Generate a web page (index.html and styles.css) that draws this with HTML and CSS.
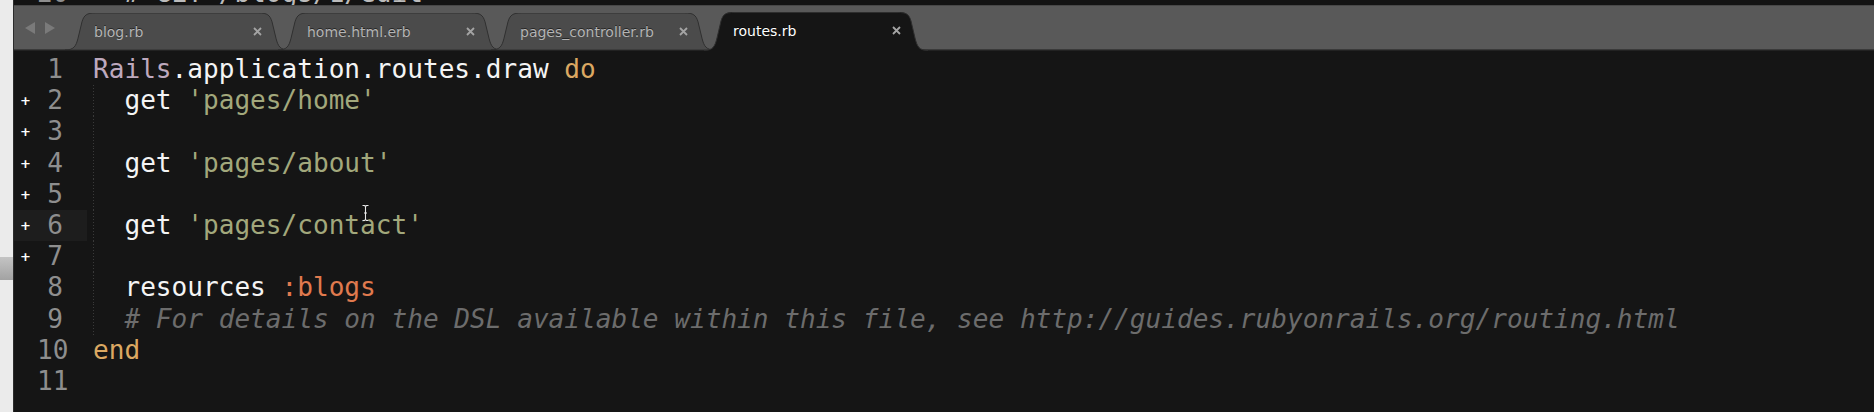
FILE: index.html
```html
<!DOCTYPE html>
<html>
<head>
<meta charset="utf-8">
<link rel="stylesheet" href="styles.css">
</head>
<body>
<div class="screen">
  <div class="side"><div class="side-bar"></div></div>
  <div class="editor">
    <div class="topstrip">
      <div class="line peek"><div class="gutter"><span class="mark"></span><span class="num">20</span></div><div class="text">  <span class="peek-t"># GET /blogs/1/edit</span></div></div>
    </div>
    <div class="tabbar">
      <div class="arrows">
        <svg width="30" height="12" viewBox="0 0 30 12"><path d="M10 0 L0 6 L10 12 Z" fill="#7a7a7a"/><path d="M20 0 L30 6 L20 12 Z" fill="#7a7a7a"/></svg>
      </div>
      <div class="tabs">
        <div class="tab">
          <svg class="shape" viewBox="0 0 224 38" preserveAspectRatio="none"><path class="fill" d="M0 38 C9 38 11 34 13 26 L17 9 C19 2 22 0 30 0 H194 C202 0 205 2 207 9 L211 26 C213 34 215 38 224 38 Z"/></svg>
          <span class="label">blog.rb</span>
          <svg class="close" width="9" height="9" viewBox="0 0 9 9"><path d="M1 1 L8 8 M8 1 L1 8"/></svg>
        </div>
        <div class="tab">
          <svg class="shape" viewBox="0 0 224 38" preserveAspectRatio="none"><path class="fill" d="M0 38 C9 38 11 34 13 26 L17 9 C19 2 22 0 30 0 H194 C202 0 205 2 207 9 L211 26 C213 34 215 38 224 38 Z"/></svg>
          <span class="label">home.html.erb</span>
          <svg class="close" width="9" height="9" viewBox="0 0 9 9"><path d="M1 1 L8 8 M8 1 L1 8"/></svg>
        </div>
        <div class="tab">
          <svg class="shape" viewBox="0 0 224 38" preserveAspectRatio="none"><path class="fill" d="M0 38 C9 38 11 34 13 26 L17 9 C19 2 22 0 30 0 H194 C202 0 205 2 207 9 L211 26 C213 34 215 38 224 38 Z"/></svg>
          <span class="label">pages_controller.rb</span>
          <svg class="close" width="9" height="9" viewBox="0 0 9 9"><path d="M1 1 L8 8 M8 1 L1 8"/></svg>
        </div>
        <div class="tab active">
          <svg class="shape" viewBox="0 0 224 39" preserveAspectRatio="none"><path class="fill" d="M0 39 C9 39 11 34 13 26 L17 9 C19 2 22 0 30 0 H194 C202 0 205 2 207 9 L211 26 C213 34 215 39 224 39 Z"/><path class="edge" d="M0 38.5 C9 38.5 11 34 13 26 L17 9 C19 2 22 0.5 30 0.5 H194 C202 0.5 205 2 207 9 L211 26 C213 34 215 38.5 224 38.5"/></svg>
          <span class="label">routes.rb</span>
          <svg class="close" width="9" height="9" viewBox="0 0 9 9"><path d="M1 1 L8 8 M8 1 L1 8"/></svg>
        </div>
      </div>
    </div>
    <div class="code">
      <div class="line"><div class="gutter"><span class="mark"></span><span class="num">1</span></div><div class="text"><span class="c-const">Rails</span>.application.routes.draw <span class="c-kw">do</span></div></div>
      <div class="line guide"><div class="gutter"><span class="mark">+</span><span class="num">2</span></div><div class="text">  get <span class="c-str">'pages/home'</span></div></div>
      <div class="line guide"><div class="gutter"><span class="mark">+</span><span class="num">3</span></div><div class="text"> </div></div>
      <div class="line guide"><div class="gutter"><span class="mark">+</span><span class="num">4</span></div><div class="text">  get <span class="c-str">'pages/about'</span></div></div>
      <div class="line guide"><div class="gutter"><span class="mark">+</span><span class="num">5</span></div><div class="text"> </div></div>
      <div class="line guide"><div class="gutter current"><span class="mark">+</span><span class="num">6</span></div><div class="text">  get <span class="c-str">'pages/contact'</span></div></div>
      <div class="line guide"><div class="gutter"><span class="mark">+</span><span class="num">7</span></div><div class="text"> </div></div>
      <div class="line guide"><div class="gutter"><span class="mark"></span><span class="num">8</span></div><div class="text">  resources <span class="c-sym">:blogs</span></div></div>
      <div class="line guide"><div class="gutter"><span class="mark"></span><span class="num">9</span></div><div class="text">  <span class="c-com"># For details on the DSL available within this file, see http://guides.rubyonrails.org/routing.html</span></div></div>
      <div class="line"><div class="gutter"><span class="mark"></span><span class="num">10</span></div><div class="text"><span class="c-kw">end</span></div></div>
      <div class="line"><div class="gutter"><span class="mark"></span><span class="num">11</span></div><div class="text"> </div></div>
      <svg class="ibeam" width="9" height="18" viewBox="0 0 9 18"><path d="M1.5 1.5 H3.5 L4.5 2.5 L5.5 1.5 H7.5 M4.5 2.5 V15.5 M1.5 16.5 H3.5 L4.5 15.5 L5.5 16.5 H7.5 M3 9 H6" stroke="#111" stroke-width="2.6" fill="none"/><path d="M1.5 1.5 H3.5 L4.5 2.5 L5.5 1.5 H7.5 M4.5 2.5 V15.5 M1.5 16.5 H3.5 L4.5 15.5 L5.5 16.5 H7.5 M3 9 H6" stroke="#e8e8e8" stroke-width="1.1" fill="none"/></svg>
    </div>
  </div>
</div>
</body>
</html>
```

FILE: styles.css
```css
html, body {
  margin: 0;
  padding: 0;
  background: #151515;
  overflow: hidden;
}

.screen {
  display: flex;
  width: 1874px;
  height: 412px;
}

.side {
  width: 13px;
  flex: none;
  background: #ebebeb;
  border-right: 1px solid #2c2c2c;
  padding-top: 257px;
  box-sizing: content-box;
}

.side-bar {
  height: 23px;
  background: linear-gradient(to bottom, #c4c4c4, #a2a2a2);
}

.editor {
  flex: 1;
  display: flex;
  flex-direction: column;
  background: #151515;
  min-width: 0;
}

.topstrip {
  height: 5px;
  overflow: hidden;
  background: #131313;
  flex: none;
}

.line.peek {
  margin-top: -22px;
}

.peek-t {
  color: #bcbcbc;
}

.tabbar {
  height: 46px;
  flex: none;
  box-sizing: border-box;
  background: #595959;
  border-top: 1px solid #474747;
  box-shadow: inset 0 -1px 0 #222, inset 0 -2px 0 #3a3a3a;
  display: flex;
  align-items: flex-end;
  padding-left: 11px;
}

.arrows {
  width: 40px;
  height: 45px;
  display: flex;
  align-items: center;
  padding-bottom: 2px;
  box-sizing: border-box;
}

.tabs {
  display: flex;
  align-items: flex-end;
}

.tab {
  position: relative;
  width: 224px;
  height: 37px;
  margin-right: -11px;
  margin-bottom: 1px;
  display: flex;
  align-items: center;
  padding: 0 25px 0 29px;
  box-sizing: border-box;
  font-family: "DejaVu Sans", sans-serif;
  font-size: 14px;
  color: #b4b4b4;
  text-shadow: 0 -1px 0 rgba(0,0,0,0.5);
}

.tab .shape {
  position: absolute;
  left: 0;
  top: 0;
  width: 100%;
  height: 100%;
  z-index: 0;
}

.tab .fill {
  fill: #4b4b4b;
  stroke: #2f2f2f;
  stroke-width: 1;
}

.tab .label {
  position: relative;
  flex: 1;
}

.tab .close {
  position: relative;
  flex: none;
  stroke: #a4a4a4;
  stroke-width: 1.8;
  margin-right: 2px;
}

.tab.active {
  z-index: 2;
  height: 39px;
  margin-bottom: 0;
  color: #ffffff;
  padding-bottom: 2px;
}

.tab.active .fill {
  fill: #151515;
  stroke: none;
}

.tab.active .edge {
  fill: none;
  stroke: #2e2e2e;
  stroke-width: 1;
}

.code {
  position: relative;
  padding-top: 3px;
  flex: 1;
}

.line {
  display: flex;
  height: 31.2px;
  line-height: 31.2px;
  font-family: "DejaVu Sans Mono", monospace;
  font-size: 26.1px;
  white-space: pre;
}

.gutter {
  width: 73px;
  flex: none;
  display: flex;
  margin-right: 6px;
}

.gutter.current {
  background: #1d1d1d;
}

.mark {
  width: 23px;
  flex: none;
  text-align: center;
  color: #ffffff;
  font-family: "DejaVu Sans", sans-serif;
  font-size: 13px;
  font-weight: bold;
}

.num {
  width: 26px;
  flex: none;
  text-align: right;
  color: #8e8e8e;
}

.text {
  color: #f4f4f4;
  flex: 1;
}

.line.guide .text {
  background-image: repeating-linear-gradient(to bottom, #3a3a3a 0 1px, transparent 1px 3px);
  background-size: 1px 100%;
  background-repeat: no-repeat;
}

.c-const { color: #bea9be; }
.c-kw { color: #dba862; }
.c-str { color: #a2a87c; }
.c-sym { color: #e07a4e; }
.c-com { color: #6c6c6c; font-style: italic; }

.ibeam {
  position: absolute;
  left: 347px;
  top: 153px;
}
```
